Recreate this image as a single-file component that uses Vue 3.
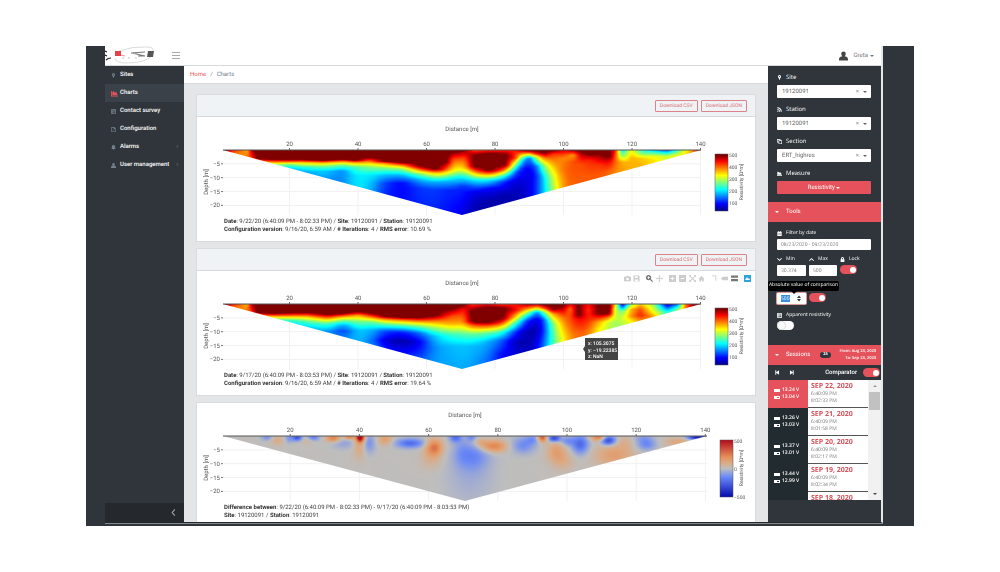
<script setup>
import { ref, onMounted } from 'vue'

const menu = [
  { label: 'Sites', icon: 'pin' },
  { label: 'Charts', icon: 'chart', active: true },
  { label: 'Contact survey', icon: 'list' },
  { label: 'Configuration', icon: 'doc' },
  { label: 'Alarms', icon: 'bell', sub: true },
  { label: 'User management', icon: 'user', sub: true },
]

const pickers = [
  { id: 'site', label: 'Site', icon: 'pin', value: '19120091' },
  { id: 'station', label: 'Station', icon: 'rss', value: '19120091' },
  { id: 'section', label: 'Section', icon: 'copy', value: 'ERT_highres' },
]

const sessions = [
  { date: 'SEP 22, 2020', from: '6:40:09 PM', to: '8:02:33 PM', a: '13.24 V', b: '13.04 V', active: true },
  { date: 'SEP 21, 2020', from: '6:40:09 PM', to: '8:01:58 PM', a: '13.26 V', b: '13.03 V' },
  { date: 'SEP 20, 2020', from: '6:40:09 PM', to: '8:02:17 PM', a: '13.37 V', b: '13.01 V' },
  { date: 'SEP 19, 2020', from: '6:40:09 PM', to: '8:02:34 PM', a: '13.44 V', b: '12.99 V' },
  { date: 'SEP 18, 2020' },
]

const icons = {
  pin: 'M8 0a5 5 0 0 0-5 5c0 3 3 5 4 10h2c1-5 4-7 4-10a5 5 0 0 0-5-5zm0 3a2 2 0 1 1 0 4 2 2 0 0 1 0-4z',
  chart: 'M0 2h2v11h14v2H0zM3 12V5l3-3 3 4 3-2 3 8z',
  list: 'M0 1h16v14H0zM2 5v2h3V5zm5 0v2h7V5zM2 9v3h3V9zm5 0v3h7V9z',
  doc: 'M1 0h10l4 4v12H1zM3 2v12h10V6H9V2zm2 6h6v1H5zm0 3h6v1H5z',
  bell: 'M8 0c-4 0-5 3-5 6 0 4-1 5-2 7h14c-1-2-2-3-2-7 0-3-1-6-5-6zM6 14h4a2 2 0 0 1-4 0z',
  user: 'M8 0a4 4 0 0 0-4 4c0 2 1 4 2 5-3 0-6 1-6 5v2h16v-2c0-4-3-5-6-5 1-1 2-3 2-5a4 4 0 0 0-4-4z',
  rss: 'M1 1h3c6 1 10 5 11 11v3h-3C12 8 8 4 1 4zM1 6c5 0 9 4 9 9H7c0-3-3-6-6-6zM1 11c2 0 4 2 4 4H1z',
  copy: 'M0 0h11v4h5v12H5v-5H0zM2 2v7h3V4h4V2zm5 4v8h7V6z',
  cal: 'M1 2h3V0h2v2h4V0h2v2h3v14H1zM3 6v2h2V6zm4 0v2h2V6zm4 0v2h2V6zM3 10v2h2v-2zm4 0v2h2v-2zm4 0v2h2v-2z',
  down: 'M0 5l2-2 6 6 6-6 2 2-8 8z',
  up: 'M0 11l2 2 6-6 6 6 2-2-8-8z',
  lock: 'M2 7h1V5a5 5 0 0 1 10 0v2h1v9H2zM6 7h4V5a2 2 0 0 0-4 0z',
  first: 'M1 1h3v6l9-6v14L4 9v6H1z',
  last: 'M15 1h-3v6L3 1v14l9-6v6h3z',
}

const modebar = [
  { x: 431, d: 'M0 4h4l2-2h4l2 2h4v10H0zM8 6a3 3 0 1 0 0 6 3 3 0 0 0 0-6z' },
  { x: 440, d: 'M1 1h12l2 2v12H1zM4 3v4h7V3zm0 7v4h8v-4z' },
  { x: 453, dark: true, d: 'M6 0a6 6 0 1 0 3 11l5 5 2-2-5-5A6 6 0 0 0 6 0zM5 3h2v2h2v2H7v2H5V7H3V5h2z' },
  { x: 463, d: 'M8 0l3 3H9v4h4V5l3 3-3 3V9H9v4h2l-3 3-3-3h2V9H3v2L0 8l3-3v2h4V3H5z' },
  { x: 476, d: 'M0 0h16v16H0zM7 4v3H4v2h3v3h2V9h3V7H9V4z' },
  { x: 486, d: 'M0 0h16v16H0zM4 7v2h8V7z' },
  { x: 496, d: 'M0 0h5L3.500 2 8 6.500 12.500 2 11 0h5v5l-2-1.500L9.500 8l4.500 4.500 2-1.500v5h-5l1.500-2L8 9.500 3.500 14 5 16H0v-5l2 1.500L6.500 8 2 3.500 0 5z' },
  { x: 505, d: 'M1 9l7-7 7 7h-2v6H9v-4H7v4H3V9z' },
  { x: 518, d: 'M2 1h10v12h-2V3H2z' },
  { x: 528, d: 'M0 8l4-4h12v8H4z' },
  { x: 538, dark: true, d: 'M0 1h16v5H0zM0 9h16v5H0z' },
]

/* Resistivity profiles: pixel column, then [depth, level] pairs from the surface down. */
const first = [
  [26, [0, 1]], [36, [0, 0.85], [4, 0.75]], [50, [0, 0.7], [6, 0.75]], [55, [0, 0.95], [7, 0.85], [10, 0.7]],
  [60, [8, 1], [12, 0.7]], [78, [9, 1], [12, 0.72], [15, 0.5], [17, 0.4]], [93, [9, 1], [12, 0.72], [14, 0.5], [19, 0.3]],
  [103, [9, 1], [12, 0.7], [17, 0.4], [22, 0.28]], [126, [10, 1], [12, 0.75], [16, 0.5], [21, 0.33], [30, 0.27]],
  [146, [9, 1], [11, 0.75], [15, 0.48], [21, 0.26], [35, 0.25]], [158, [10, 1], [12, 0.75], [17, 0.45], [25, 0.36], [38, 0.36]],
  [172, [7, 1], [11, 0.75], [17, 0.5], [25, 0.36], [35, 0.33], [45, 0.3]],
  [188, [11, 1], [13, 0.75], [18, 0.5], [25, 0.31], [33, 0.18], [45, 0.15]],
  [205, [12, 1], [15, 0.75], [19, 0.5], [25, 0.3], [33, 0.12], [50, 0.13]],
  [224, [16, 1], [20, 0.75], [24, 0.5], [29, 0.32], [38, 0.18], [55, 0.16]],
  [239, [19, 1], [22, 0.75], [27, 0.5], [32, 0.3], [40, 0.18], [60, 0.16]],
  [249, [12, 1], [19, 0.8], [26, 0.5], [31, 0.3], [40, 0.16], [60, 0.14]],
  [256, [1, 1], [10, 0.78], [20, 0.62], [28, 0.36], [40, 0.16], [60, 0.13]],
  [267, [0, 0.98], [8, 0.8], [18, 0.65], [26, 0.38], [36, 0.16], [62, 0.1]],
  [277, [0, 0.8], [4, 0.95], [8, 1], [16, 1], [21, 0.78], [30, 0.37], [42, 0.1], [58, 0.04]],
  [293, [0, 0.85], [4, 1], [20, 1], [24, 0.75], [30, 0.37], [38, 0.13], [50, 0.04]],
  [308, [0, 0.85], [5, 1], [15, 1], [20, 0.75], [26, 0.38], [32, 0.15], [45, 0.04]],
  [318, [0, 0.85], [8, 0.82], [15, 0.5], [22, 0.2], [30, 0.08], [45, 0.05]],
  [325, [0, 0.95], [4, 0.7], [10, 0.35], [18, 0.14], [40, 0.06]],
  [332, [0, 1], [4, 0.65], [8, 0.2], [20, 0.1], [45, 0.09]],
  [339, [0, 1], [3, 0.88], [7, 0.58], [16, 0.22], [25, 0.13], [42, 0.15]],
  [347, [0, 1], [3, 0.97], [8, 0.75], [16, 0.52], [28, 0.36], [40, 0.34]],
  [356, [0, 0.98], [4, 0.82], [12, 0.73], [25, 0.6], [38, 0.54]],
  [366, [0, 0.9], [8, 0.74], [20, 0.77], [35, 0.74]], [376, [0, 0.95], [5, 0.72], [12, 0.8], [30, 0.79]],
  [384, [0, 1], [6, 0.9], [14, 0.8], [30, 0.78]], [393, [0, 1], [4, 0.98], [10, 0.84], [25, 0.79]],
  [401, [0, 1], [4, 0.96], [15, 0.82], [25, 0.79]], [412, [0, 1], [6, 1], [12, 0.88], [22, 0.78]],
  [418, [0, 0.86], [6, 0.8], [20, 0.74]], [425, [0, 0.36], [6, 0.5], [12, 0.7], [20, 0.72]],
  [434, [0, 0.62], [8, 0.7], [18, 0.7]], [445, [0, 0.42], [3, 0.48], [8, 0.67], [15, 0.7]],
  [457, [0, 0.3], [2, 0.42], [6, 0.6], [10, 0.65]], [470, [0, 0.2], [3, 0.4], [6, 0.58]],
  [483, [0, 0.5], [5, 0.62]], [496, [0, 0.75]], [504, [0, 1]],
]

const second = [
  [26, [0, 1]], [36, [0, 0.85], [4, 0.75]], [50, [0, 0.7], [6, 0.75]], [55, [0, 0.95], [7, 0.85], [10, 0.7]],
  [60, [8, 1], [12, 0.7]], [78, [9, 1], [12, 0.72], [15, 0.5], [17, 0.4]], [98, [8, 1], [12, 0.72], [16, 0.45], [21, 0.32]],
  [110, [8, 1], [12, 0.72], [17, 0.47], [24, 0.31]], [130, [10, 1], [14, 0.75], [19, 0.47], [27, 0.28], [34, 0.28]],
  [146, [9, 1], [12, 0.75], [16, 0.5], [21, 0.28], [27, 0.18], [36, 0.26]], [161, [7, 1], [11, 0.72], [17, 0.5], [26, 0.33], [40, 0.31]],
  [175, [9, 1], [13, 0.75], [18, 0.47], [26, 0.3], [36, 0.24], [45, 0.27]], [188, [12, 1], [15, 0.75], [20, 0.47], [27, 0.19], [36, 0.08], [50, 0.17]],
  [205, [13, 1], [16, 0.75], [21, 0.47], [28, 0.15], [37, 0.03], [54, 0.17]], [222, [13, 1], [17, 0.75], [22, 0.49], [29, 0.22], [38, 0.1], [56, 0.2]],
  [238, [11, 1], [17, 0.75], [24, 0.52], [32, 0.33], [44, 0.27], [60, 0.28]], [254, [4, 1], [12, 0.8], [20, 0.7], [30, 0.44], [42, 0.31], [60, 0.29]],
  [266, [0, 1], [6, 0.85], [18, 0.72], [30, 0.45], [42, 0.32], [62, 0.3]],
  [275, [0, 0.82], [5, 0.95], [8, 1], [17, 1], [21, 0.8], [30, 0.48], [42, 0.31], [62, 0.28]],
  [290, [0, 0.88], [4, 1], [18, 1], [22, 0.78], [29, 0.47], [38, 0.3], [55, 0.24]],
  [305, [0, 0.82], [4, 1], [14, 1], [21, 0.72], [28, 0.42], [36, 0.22], [50, 0.12]],
  [318, [0, 0.85], [6, 0.88], [13, 0.68], [20, 0.4], [28, 0.16], [38, 0.05], [50, 0.09]],
  [330, [0, 0.95], [5, 0.72], [11, 0.4], [17, 0.15], [28, 0.03], [45, 0.05]],
  [340, [0, 0.92], [4, 0.65], [8, 0.26], [14, 0.1], [24, 0.04], [42, 0.09]],
  [347, [0, 1], [4, 0.8], [8, 0.5], [16, 0.2], [28, 0.16], [40, 0.24]],
  [355, [0, 1], [5, 0.96], [10, 0.7], [20, 0.48], [38, 0.44]], [366, [0, 1], [6, 0.9], [14, 0.76], [25, 0.68], [35, 0.62]],
  [373, [0, 0.88], [5, 0.76], [15, 0.8], [32, 0.74]], [381, [0, 0.97], [4, 1], [11, 1], [15, 0.88], [30, 0.78]],
  [391, [0, 0.86], [6, 0.82], [15, 0.84], [28, 0.77]], [402, [0, 0.98], [3, 1], [9, 1], [13, 0.86], [18, 0.7], [25, 0.62]],
  [412, [0, 0.98], [3, 1], [9, 1], [13, 0.76], [18, 0.57], [25, 0.56]], [418, [0, 0.68], [6, 0.58], [20, 0.52]],
  [425, [0, 0.06], [3, 0.22], [7, 0.48], [14, 0.58], [20, 0.55]], [433, [0, 0.5], [5, 0.68], [12, 0.72], [18, 0.6]],
  [443, [0, 0.68], [5, 0.8], [11, 0.85], [16, 0.75]], [457, [0, 0.52], [6, 0.58], [12, 0.7]],
  [470, [0, 0.06], [3, 0.2], [8, 0.4]], [480, [0, 0.22], [3, 0.38], [6, 0.5]], [488, [0, 0.75], [4, 0.75]], [496, [0, 0.95]], [504, [0, 1]],
]

/* Difference anomalies: x, depth, horizontal radius, vertical radius, amplitude. */
const blobs = [
  [70, 1, 5, 3, -0.25], [80, 4, 6, 4, 0.18], [92, 2, 4, 4, -0.22], [100, 1, 4, 3, -0.6], [116, 1, 5, 3, -0.38],
  [111, 4, 5, 3, 0.13], [136, 2, 6, 3, 0.48], [152, 1, 4, 2, 0.45], [163, 1, 3.500, 4, 1], [162, 9, 5, 11, 0.22], [147, 7, 10, 5, -0.15],
  [172, 7, 5, 8, -0.25], [188, 3, 6, 5, 0.28], [213, 7, 12, 4, -0.46], [237, 11, 7, 7, 0.5], [234, 22, 9, 9, 0.14],
  [258, 1, 5, 4, -0.42], [275, 19, 14, 12, -0.28], [273, 40, 20, 24, -0.11], [274, 1, 4, 3, -0.24], [264, 14, 6, 12, -0.08],
  [296, 10, 11, 5, 0.48], [283, 6, 6, 4, 0.2], [326, 9, 10, 7, -0.29], [336, 3, 6, 4, -0.22],
  [345, 1, 4, 4, 0.66], [357, 2, 5, 3, -0.68], [359, 15, 8, 9, 0.26], [366, 25, 9, 8, 0.14],
  [383, 8, 7, 8, -0.48], [370, 5, 6, 4, -0.27], [402, 1, 7, 3, 0.5], [411, 4, 6, 4, -0.72], [417, 19, 16, 10, 0.28],
  [428, 6, 6, 6, 0.1], [449, 8, 8, 5, -0.32], [446, 2, 8, 3, -0.14], [481, 6, 11, 4, 0.22], [500, 1, 8, 2, -0.9], [509, 1, 3, 1, -0.8],
]

const jet = [[0, 0, 0, 131], [0.125, 0, 0, 255], [0.375, 0, 255, 255], [0.625, 255, 255, 0], [0.875, 250, 0, 0], [0.97, 128, 0, 0], [1, 128, 0, 0]]
const rdbu = [[0, 5, 10, 172], [0.35, 106, 137, 247], [0.5, 190, 190, 190], [0.6, 220, 170, 132], [0.7, 230, 145, 90], [1, 178, 10, 28]]

function colour(scale, v) {
  const t = Math.max(0, Math.min(1, v))
  let i = 1
  while (i < scale.length - 1 && scale[i][0] < t) i++
  const a = scale[i - 1]
  const b = scale[i]
  const k = (t - a[0]) / (b[0] - a[0])
  return [1, 2, 3].map((n) => a[n] + (b[n] - a[n]) * k)
}

function column(points, y) {
  if (y <= points[0][0]) return points[0][1]
  for (let i = 1; i < points.length; i++) {
    if (y <= points[i][0]) {
      const [y0, v0] = points[i - 1]
      const [y1, v1] = points[i]
      return v0 + ((v1 - v0) * (y - y0)) / (y1 - y0)
    }
  }
  return points[points.length - 1][1]
}

function profileField(profiles) {
  const sample = (x, y) => {
    let i = 1
    while (i < profiles.length - 1 && profiles[i][0] < x) i++
    const [xa, ...pa] = profiles[i - 1]
    const [xb, ...pb] = profiles[i]
    const t = Math.max(0, Math.min(1, (x - xa) / (xb - xa)))
    return column(pa, y) * (1 - t) + column(pb, y) * t
  }
  /* Wider horizontal averaging with depth keeps the deep layers smooth. */
  return (x, y) => {
    const r = 1 + Math.min(5, y / 6)
    return (sample(x - r, y) + sample(x - r / 2, y) + sample(x, y) + sample(x + r / 2, y) + sample(x + r, y)) / 5
  }
}

function blobField(x, y) {
  let v = 0
  for (const [bx, by, rx, ry, amp] of blobs) {
    v += amp * Math.exp(-(((x - bx) / rx) ** 2 + ((y - by) / ry) ** 2) / 1.4)
  }
  return 0.5 + v / 2 + 0.005
}

function paint(canvas, chart) {
  const w = canvas.width
  const h = canvas.height
  const ctx = canvas.getContext('2d')
  const img = ctx.createImageData(w, h)
  for (let py = 0; py < h; py++) {
    for (let px = 0; px < w; px++) {
      const [r, g, b] = colour(chart.scale, chart.field(26 + px / 2, py / 2))
      const o = (py * w + px) * 4
      img.data[o] = r
      img.data[o + 1] = g
      img.data[o + 2] = b
      img.data[o + 3] = 255
    }
  }
  ctx.putImageData(img, 0, 0)
}

const charts = [
  {
    header: true, top: 33, step: 3.425, end: 504, apex: 265, bar: 518, scale: jet, field: profileField(first),
    ticks: [['500', 38], ['400', 50], ['300', 62], ['200', 74], ['100', 86]],
    info: [
      [['Date', '9/22/20 (6:40:09 PM - 8:02:33 PM)'], ['Site', '19120091'], ['Station', '19120091']],
      [['Configuration version', '9/16/20, 6:59 AM'], ['# Iterations', '4'], ['RMS error', '10.69 %']],
    ],
  },
  {
    header: true, modebar: true, top: 33, step: 3.425, end: 504, apex: 265, bar: 518, scale: jet, field: profileField(second),
    ticks: [['500', 38], ['400', 50], ['300', 62], ['200', 74], ['100', 86]],
    info: [
      [['Date', '9/17/20 (6:40:09 PM - 8:03:53 PM)'], ['Site', '19120091'], ['Station', '19120091']],
      [['Configuration version', '9/16/20, 6:59 AM'], ['# Iterations', '4'], ['RMS error', '19.64 %']],
    ],
  },
  {
    top: 33, step: 3.46, end: 510, apex: 268, bar: 523, scale: rdbu, field: blobField,
    ticks: [['500', 38], ['0', 66], ['−500', 94]],
    info: [
      [['Difference between', '9/22/20 (6:40:09 PM - 8:02:33 PM) - 9/17/20 (6:40:09 PM - 8:03:53 PM)']],
      [['Site', '19120091'], ['Station', '19120091']],
    ],
  },
]

const xs = [20, 40, 60, 80, 100, 120, 140]
const ys = [5, 10, 15, 20]
const tickX = (chart, m) => 24 + chart.step * m

const canvases = ref([])
onMounted(() => canvases.value.forEach((c, i) => paint(c, charts[i])))

const lock = ref(true)
const absolute = ref(true)
const apparent = ref(false)
const comparator = ref(true)
</script>

<template>
  <div class="frame">
    <div class="app">
      <header class="topbar">
        <svg class="logo" viewBox="0 0 52 20" role="img" aria-label="LSI">
          <path d="M0 5l2 1M0 9l2 1M1 14q2-2 5-2" fill="none" stroke="#222" stroke-width="1.200" />
          <path d="M14 5Q28 0 42 1q7 0 6 4M10 12q0 5 12 5 16 0 24-6" fill="none" stroke="#ccc" stroke-width="0.700" />
          <rect x="10" y="5" width="6" height="5" fill="#e5414a" />
          <path d="M16 9l4 1" stroke="#e9777c" stroke-width="0.800" />
          <path d="M26 7l14-1M27 7l13 3M33 10l7 0" stroke="#777" stroke-width="1.200" />
          <path d="M43 5h6l-1 6h-6z" fill="#555" />
          <path d="M17 12h2m4 0h2m5 0h2" stroke="#b8c9cc" stroke-width="1" />
        </svg>
        <button class="burger" aria-label="Toggle menu"><i></i><i></i><i></i></button>
        <button class="account">
          <svg viewBox="0 0 16 16"><path :d="icons.user" /></svg>
          <span>Greta</span><b class="caret"></b>
        </button>
      </header>

      <nav class="sidebar">
        <a v-for="m in menu" :key="m.label" href="#" class="item" :class="{ active: m.active }">
          <svg viewBox="0 0 16 16"><path :d="icons[m.icon]" fill-rule="evenodd" /></svg>
          <span>{{ m.label }}</span>
          <em v-if="m.sub">‹</em>
        </a>
        <button class="minimize" aria-label="Minimize menu">
          <svg viewBox="0 0 16 16"><path d="M11 1L5 8l6 7" fill="none" stroke="#a0a6aa" stroke-width="2.500" /></svg>
        </button>
      </nav>

      <main class="main">
        <div class="crumbs"><a href="#">Home</a><span>/</span><span>Charts</span></div>
        <div class="cards">
          <section v-for="(c, n) in charts" :key="n" class="card">
            <div v-if="c.header" class="card-head">
              <button class="outline">Download CSV</button>
              <button class="outline">Download JSON</button>
            </div>
            <svg class="plot" viewBox="0 0 558 101">
              <defs>
                <linearGradient :id="'bar' + n" x1="0" y1="1" x2="0" y2="0">
                  <stop v-for="s in c.scale" :key="s[0]" :offset="s[0]" :stop-color="`rgb(${s[1]},${s[2]},${s[3]})`" />
                </linearGradient>
                <clipPath :id="'area' + n">
                  <path :d="`M26 ${c.top}H${c.end}L${c.apex} ${c.top + 65}z`" />
                </clipPath>
              </defs>
              <g stroke="#f1f1f1" stroke-width="1">
                <path v-for="x in xs" :key="x" :d="`M${tickX(c, x)} ${c.top}v65`" />
                <path v-for="y in ys" :key="y" :d="`M26 ${c.top + y * 2.77}H${c.end}`" />
              </g>
              <g :clip-path="`url(#area${n})`">
                <foreignObject x="26" :y="c.top" :width="c.end - 26" height="65">
                  <canvas ref="canvases" class="field" :width="(c.end - 26) * 2" height="130"></canvas>
                </foreignObject>
              </g>
              <path :d="`M26 ${c.top}H${c.end}`" stroke="#555" stroke-width="1" />
              <g class="axis">
                <text :x="c.apex" y="14" text-anchor="middle">Distance [m]</text>
                <g v-for="x in xs" :key="x">
                  <text :x="tickX(c, x)" :y="c.top - 4" text-anchor="middle">{{ x }}</text>
                  <path :d="`M${tickX(c, x)} ${c.top - 2}v2`" stroke="#666" />
                </g>
                <g v-for="y in ys" :key="y">
                  <text x="23" :y="c.top + y * 2.77 + 2" text-anchor="end">−{{ y }}</text>
                  <path :d="`M24 ${c.top + y * 2.77}h2`" stroke="#777" />
                </g>
                <text :transform="`translate(11 ${c.top + 32}) rotate(-90)`" text-anchor="middle">Depth [m]</text>
              </g>
              <rect :x="c.bar" :y="c.top + 4" width="13" height="57" :fill="`url(#bar${n})`" stroke="#555" stroke-width="0.500" />
              <g class="scale">
                <text v-for="t in c.ticks" :key="t[0]" :x="c.bar + 14" :y="t[1] + 2">{{ t[0] }}</text>
                <text :transform="`translate(546 ${c.top + 32}) rotate(-90)`" text-anchor="middle">Resistivity [Ω*m]</text>
              </g>
              <template v-if="c.modebar">
                <svg v-for="m in modebar" :key="m.x" :x="m.x - 4" y="4" width="7" height="7" viewBox="0 0 16 16">
                  <path :d="m.d" fill-rule="evenodd" :fill="m.dark ? '#777' : '#ccc'" />
                </svg>
                <rect x="547" y="4" width="7" height="7" fill="#2fa4dc" />
                <path d="M548 9l2-3 1 2 1-1 1 2z" fill="#fff" />
                <path d="M386 78l2-3V67h33v22h-33v-8z" fill="#444" />
                <g class="hover">
                  <text x="391" y="74">x: 105.3075</text>
                  <text x="391" y="81">y: −19.22385</text>
                  <text x="391" y="87">z: NaN</text>
                </g>
              </template>
            </svg>
            <div class="info">
              <div v-for="(line, l) in c.info" :key="l">
                <template v-for="(p, i) in line" :key="p[0]"><template v-if="i"> / </template><b>{{ p[0] }}</b>: {{ p[1] }}</template>
              </div>
            </div>
          </section>
        </div>
      </main>

      <aside class="aside">
        <div class="pickers">
          <div v-for="p in pickers" :key="p.id" class="picker">
            <label :for="p.id"><svg viewBox="0 0 16 16"><path :d="icons[p.icon]" fill-rule="evenodd" /></svg>{{ p.label }}</label>
            <div class="combo">
              <select :id="p.id"><option>{{ p.value }}</option></select>
              <button aria-label="Clear">×</button><b class="caret"></b>
            </div>
          </div>
          <div class="picker">
            <label for="measure"><svg viewBox="0 0 16 16"><path :d="icons.chart" /></svg>Measure</label>
            <button id="measure" class="measure">Resistivity <b class="caret"></b></button>
          </div>
        </div>
        <button class="band"><b class="caret"></b><span>Tools</span></button>
        <div class="tools">
          <label for="dates"><svg viewBox="0 0 16 16"><path :d="icons.cal" fill-rule="evenodd" /></svg>Filter by date</label>
          <input id="dates" class="box" value="08/23/2020 - 09/23/2020" />
          <div class="trio">
            <label for="min"><svg viewBox="0 0 16 16"><path :d="icons.down" /></svg>Min</label>
            <label for="max"><svg viewBox="0 0 16 16"><path :d="icons.up" /></svg>Max</label>
            <label for="lock"><svg viewBox="0 0 16 16"><path :d="icons.lock" fill-rule="evenodd" /></svg>Lock</label>
            <input id="min" class="box" value="30.374" />
            <input id="max" class="box" value="500" />
            <input id="lock" v-model="lock" type="checkbox" class="switch" />
          </div>
          <div class="trio compare">
            <div class="spin">
              <input id="abs" class="box" value="500" aria-label="Absolute value of comparison" />
              <svg viewBox="0 0 8 14"><path d="M0 6l4-5 4 5zM0 8l4 5 4-5z" /></svg>
            </div>
            <input v-model="absolute" type="checkbox" class="switch" aria-label="Absolute" />
            <div class="tip">Absolute value of comparison</div>
          </div>
          <label for="apparent"><svg viewBox="0 0 16 16"><path :d="icons.list" fill-rule="evenodd" /></svg>Apparent resistivity</label>
          <input id="apparent" v-model="apparent" type="checkbox" class="switch" />
        </div>
        <button class="band">
          <b class="caret"></b><span>Sessions</span><i class="badge">25</i>
          <span class="range">From: Aug 23, 2020<br />To: Sep 23, 2020</span>
        </button>
        <div class="compare-row">
          <button aria-label="First"><svg viewBox="0 0 16 16"><path :d="icons.first" /></svg></button>
          <button aria-label="Last"><svg viewBox="0 0 16 16"><path :d="icons.last" /></svg></button>
          <label for="comparator">Comparator</label>
          <input id="comparator" v-model="comparator" type="checkbox" class="switch" />
        </div>
        <div class="sessions">
          <div class="rows">
            <div v-for="s in sessions" :key="s.date" class="session" :class="{ active: s.active }">
              <div class="volts">
                <template v-if="s.a">
                  <span><i class="battery full"></i>{{ s.a }}</span>
                  <span><i class="battery"></i>{{ s.b }}</span>
                </template>
              </div>
              <div class="when"><strong>{{ s.date }}</strong><span>{{ s.from }}</span><span>{{ s.to }}</span></div>
            </div>
          </div>
          <div class="scroll"><b class="caret up"></b><i></i><b class="caret"></b></div>
        </div>
      </aside>
    </div>
  </div>
</template>

<style>
body { margin: 0; background: #fff; }
</style>

<style scoped>
* { box-sizing: border-box; }
button, input, select { font: inherit; color: inherit; margin: 0; padding: 0; border: 0; background: none; border-radius: 0; text-rendering: inherit; }
.frame {
  margin: 46px 86px; height: calc(100vh - 92px); padding: 0 31px 3px 19px; background: #2f353a;
  font: 6px/8px Roboto, "Open Sans", sans-serif; color: #444; text-rendering: geometricPrecision;
}
.app {
  height: 100%; display: grid; grid-template: 20px minmax(0, 1fr) / 79px minmax(0, 1fr) 113px;
  border-right: 2px solid #e4e6e8; border-bottom: 1px solid #23282c; box-shadow: 0 1px #85888b;
}
.topbar { grid-column: 1 / -1; display: flex; align-items: center; background: #fff; border-bottom: 1px solid #d5d9dc; padding-right: 7px; }
.logo { width: 52px; height: 20px; flex: none; }
.burger { width: 8px; margin-left: 15px; display: grid; gap: 2px; }
.burger i { height: 1px; background: #a5a9ac; }
.account { margin-left: auto; display: flex; align-items: center; gap: 6px; color: #777; }
.account svg { width: 9px; height: 10px; fill: #444; }
.account .caret { margin-left: -4px; }
.caret { display: inline-block; border: 2px solid transparent; border-top-color: currentColor; border-bottom-width: 0; }
.caret.up { border-top-width: 0; border-bottom: 2px solid currentColor; }

.sidebar { background: #2f353a; color: #fff; display: flex; flex-direction: column; }
.item { height: 18px; display: flex; align-items: center; padding: 0 6px; gap: 4px; color: #fff; text-decoration: none; font-weight: 500; }
.item svg { width: 5px; height: 5px; fill: #73818f; }
.item.active { background: #3a4148; }
.item.active svg { width: 7px; height: 7px; margin-right: -2px; fill: #e5525b; }
.item em { margin-left: auto; font-style: normal; color: #73818f; }
.minimize { margin-top: auto; height: 19px; background: #25292d; display: flex; align-items: center; justify-content: flex-end; padding-right: 7px; }
.minimize svg { width: 7px; height: 7px; }

.main { background: #e4e5e6; overflow: hidden; min-width: 0; }
.crumbs { height: 18px; background: #fff; border-bottom: 1px solid #d5d9dc; display: flex; align-items: center; gap: 4px; padding-left: 6px; color: #73818f; }
.crumbs a { color: #e5525b; text-decoration: none; }
.cards { padding: 11px 13px; display: grid; gap: 8px; }
.card { background: #fff; box-shadow: 0 0 0 1px #d9dcdf; }
.card-head { height: 22px; background: #f0f3f5; border-bottom: 1px solid #d5d9dc; display: flex; justify-content: flex-end; align-items: center; gap: 3px; padding-right: 8px; }
.outline { height: 12px; padding: 0 4px; border: 1px solid #dd8289; border-radius: 1px; color: #db6b73; font-size: 5px; line-height: 8px; }
.plot { display: block; width: 100%; }
.plot text { font: 6px Roboto, "Open Sans", sans-serif; fill: #555; }
.plot .scale text { font-size: 5px; }
.plot .hover text { font-size: 5px; font-weight: 500; fill: #fff; }
.field { display: block; width: 100%; height: 100%; }
.info { padding: 0 27px 7px; line-height: 8px; }
.info b { font-weight: 700; color: #333; }

.aside { background: #2f353a; color: #fff; overflow: hidden; display: flex; flex-direction: column; font-family: "Open Sans", "Noto Sans", sans-serif; }
.aside label { display: flex; align-items: center; gap: 4px; font-weight: 500; }
.aside label svg { width: 5px; height: 5px; fill: #fff; flex: none; }
.pickers { padding: 7px 10px 8px 9px; display: grid; gap: 7px; }
.picker { display: grid; gap: 4px; }
.combo { height: 13px; background: #fff; color: #666; display: flex; align-items: center; padding: 0 4px 0 5px; gap: 4px; border-radius: 1px; font-family: Roboto, "Open Sans", sans-serif; }
.combo select { appearance: none; flex: 1; min-width: 0; height: 13px; }
.combo button { color: #888; }
.measure { height: 13px; background: #e5525b; color: #fff; border-radius: 1px; font-family: Roboto, "Open Sans", sans-serif; }
.band { height: 20px; flex: none; background: #e5525b; display: flex; align-items: center; gap: 7px; padding: 0 5px 0 7px; font-family: Roboto, "Open Sans", sans-serif; }
.badge { font: 700 4px/6px "Open Sans", sans-serif; background: #2f353a; border-radius: 3px; padding: 0 3px; margin-left: 3px; }
.range { margin-left: auto; font: 600 4px/7px "Open Sans", sans-serif; text-align: right; }
.tools { padding: 7px 10px 15px 9px; display: grid; gap: 2px; font-size: 5px; }
.box { width: 100%; height: 11px; background: #fff; color: #777; padding: 0 4px; min-width: 0; font-size: 5px; border-radius: 1px; }
.trio { display: grid; grid-template-columns: 29px 28px 1fr; gap: 2px 3px; margin-top: 3px; position: relative; }
.compare { margin: 15px 0 5px; }
.switch { appearance: none; width: 17px; height: 9px; border-radius: 5px; background: #fff; display: flex; align-items: center; padding: 1px; cursor: pointer; }
.switch::before { content: ""; width: 7px; height: 7px; border-radius: 50%; background: #fff; box-shadow: 0 0 0 1px #ddd; }
.switch:checked { background: #e5525b; justify-content: flex-end; }
.switch:checked::before { width: 6px; height: 6px; box-shadow: none; }
.spin { position: relative; }
.spin .box { box-shadow: 0 0 0 1px #d99a9e; color: #e4f0fb; background: linear-gradient(#3a8ddc, #3a8ddc) 4px 2px / 9px 7px no-repeat #fff; }
.spin svg { position: absolute; right: 5px; top: 2px; width: 4px; height: 7px; fill: #333; }
.tip { position: absolute; left: -9px; bottom: 13px; width: 71px; height: 10px; line-height: 9px; background: #000; color: #fff; text-align: center; border-radius: 2px; white-space: nowrap; }
.tip::after { content: ""; position: absolute; left: 23px; top: 10px; border: 3px solid transparent; border-top-color: #000; border-bottom: 0; }
.compare-row { height: 15px; flex: none; display: flex; align-items: center; gap: 9px; padding: 0 1px 0 7px; }
.compare-row button { display: flex; }
.compare-row svg { width: 5px; height: 5px; fill: #fff; }
.compare-row label { margin-left: auto; font-family: Roboto, "Open Sans", sans-serif; }
.compare-row .switch { margin-left: -3px; }
.sessions { height: 120px; flex: none; display: flex; background: #222b30; }
.rows { flex: 1; overflow: hidden; }
.session { height: 28px; display: grid; grid-template-columns: 40px 1fr; font-size: 5px; }
.volts { display: flex; flex-direction: column; justify-content: center; padding-left: 6px; line-height: 7px; font-weight: 600; }
.session.active .volts { background: #e5525b; }
.volts span { display: flex; align-items: center; gap: 2px; }
.battery { width: 6px; height: 3px; border: 1px solid #fff; border-left-width: 3px; }
.battery.full { background: #fff; }
.when { background: #fff; color: #777; border-bottom: 1px solid #555; padding-left: 3px; display: flex; flex-direction: column; line-height: 7px; padding-top: 2px; }
.when strong { font-size: 7px; line-height: 9px; color: #d9535c; white-space: nowrap; }
.scroll { width: 13px; background: #f1f1f1; color: #444; display: flex; flex-direction: column; align-items: center; padding: 5px 0; gap: 5px; }
.scroll i { width: 11px; height: 18px; background: #c1c1c1; }
.scroll .caret:last-child { margin-top: auto; }
.scroll .up { color: #999; }
</style>
